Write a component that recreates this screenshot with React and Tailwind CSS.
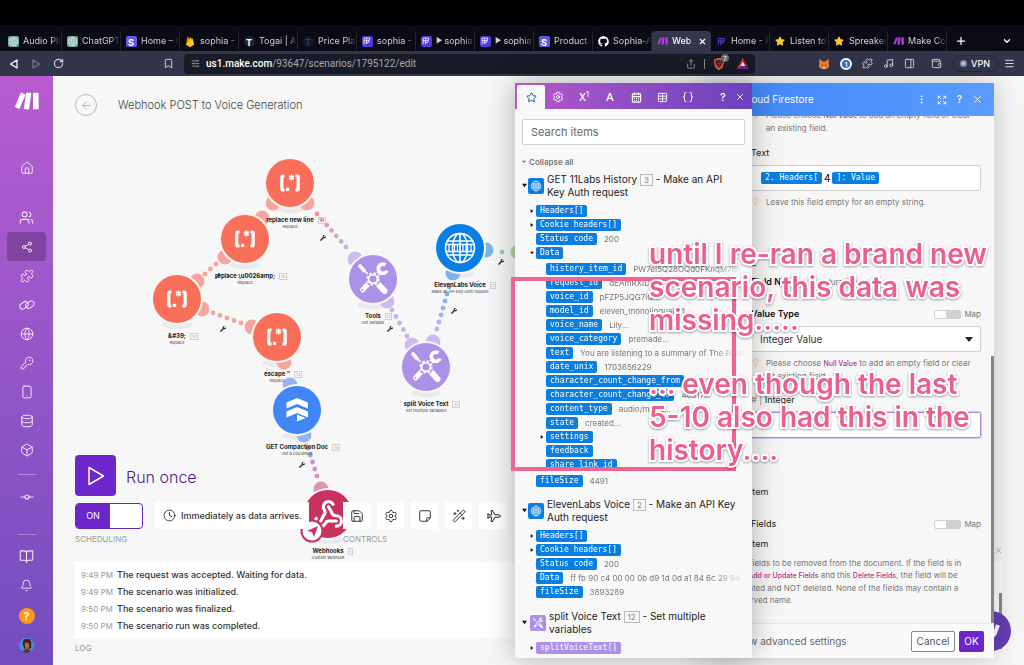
import {
  Bell,
  BookOpen,
  Box,
  Braces,
  CalendarDays,
  ChevronDown,
  Clock,
  Database,
  Globe,
  House,
  KeyRound,
  Lightbulb,
  Menu,
  Music,
  PanelRight,
  Plane,
  Plus,
  Puzzle,
  RotateCw,
  Save,
  Settings,
  Share,
  Share2,
  Smartphone,
  Star,
  StickyNote,
  Table,
  Users,
  Wallet,
  WandSparkles,
  Webhook,
  X,
  Bookmark,
  Expand,
  EllipsisVertical,
  GitCommitHorizontal,
  ArrowLeft,
  SlidersHorizontal,
} from "lucide-react";
import { FaGithub, FaStar, FaWrench } from "react-icons/fa";
import { SiBrave, SiOpenai } from "react-icons/si";

/* ---------- browser ---------- */

const MakeLogo = ({ className, fill = "#fff" }) => (
  <svg viewBox="0 0 25 18" className={className} fill={fill}>
    <path d="M7 .6 11.6 2.4 5.4 17 .8 15z" />
    <path d="M12.2.6 17.4 1 15 17.4 9.8 17z" />
    <path d="M19 .8h5.6v16.4H19z" />
  </svg>
);

const FirebaseIcon = () => (
  <svg viewBox="0 0 12 12" className="h-3 w-3">
    <path d="M2 9.6 3.4 1.2 5.4 4z" fill="#f57c00" />
    <path d="M2 9.6 6.6 1.8 10 9.6 6 12z" fill="#ffb300" />
    <path d="M2 9.6 8.8 3.2 10 9.6 6 12z" fill="#ffca28" />
  </svg>
);

const FIcon = ({ className }) => (
  <svg viewBox="0 0 12 12" className={className} fill="none" stroke="currentColor" strokeWidth="1">
    <path d="M2.5 10V2.5h7L8.6 5.6H2.5M5 10l.8-7.5M5 8l3-.4.6-2" />
  </svg>
);

const Favicon = ({ kind }) => {
  if (kind === "gpt")
    return (
      <span className="grid h-[11px] w-[11px] place-items-center rounded-xs bg-[#74a99b] text-white">
        <SiOpenai size={9} />
      </span>
    );
  if (kind === "s")
    return (
      <span className="grid h-[11px] w-[11px] place-items-center rounded-xs bg-[#635bdf] text-[9px] font-bold text-white">
        S
      </span>
    );
  if (kind === "fire") return <FirebaseIcon />;
  if (kind === "togai")
    return (
      <span className="grid h-[11px] w-[11px] place-items-center rounded-full bg-[#20222e] text-[9px] font-bold text-white">
        T
      </span>
    );
  if (kind === "price")
    return (
      <span className="grid h-[11px] w-[11px] place-items-center rounded-full bg-[#111a33] text-[8px] font-bold text-[#2a4475]">
        T
      </span>
    );
  if (kind === "f")
    return (
      <span className="grid h-[11px] w-[11px] place-items-center rounded-xs bg-[#5138e0] text-white">
        <FIcon className="h-[10px] w-[10px]" />
      </span>
    );
  if (kind === "fdark") return <FIcon className="h-[11px] w-[11px] text-[#5a45e8]" />;
  if (kind === "github") return <FaGithub size={11} className="text-white" />;
  if (kind === "star") return <FaStar size={10} className="text-[#ffc629]" />;
  return <MakeLogo className="h-2 w-[11px]" fill="#b339e6" />;
};

const tabs = [
  { icon: "gpt", title: "Audio Pla" },
  { icon: "gpt", title: "ChatGPT" },
  { icon: "s", title: "Home – O" },
  { icon: "fire", title: "sophia - F" },
  { icon: "togai", title: "Togai | Ac" },
  { icon: "price", title: "Price Plan" },
  { icon: "f", title: "sophia - F" },
  { icon: "f", title: "sophia", playing: true },
  { icon: "f", title: "sophia", playing: true },
  { icon: "s", title: "Product c" },
  { icon: "github", title: "Sophia-A" },
  { icon: "make", title: "Web", active: true },
  { icon: "fdark", title: "Home - F" },
  { icon: "star", title: "Listen to" },
  { icon: "star", title: "Spreaker" },
  { icon: "make", title: "Make Co" },
];

const TabBar = () => (
  <div className="flex h-[26px] items-end bg-[#0b0b16] pl-[3px] pr-3">
    {tabs.map((tab, i) => (
      <button
        key={i}
        className={`flex h-5 w-[59px] items-center gap-1 overflow-hidden pl-1 text-[9px] ${
          tab.active
            ? "rounded-t-sm bg-[#34364a] font-medium text-white"
            : "border-r border-[#25252f] text-[#d0d0d6]"
        }`}
      >
        <span className="flex w-[12px] shrink-0 justify-center">
          <Favicon kind={tab.icon} />
        </span>
        <span className="flex min-w-0 flex-1 items-center gap-[2px] overflow-hidden whitespace-nowrap text-left [mask-image:linear-gradient(to_right,#000_75%,transparent)]">
          {tab.playing && <span className="text-[7px]">▶</span>}
          {tab.title}
        </span>
        {tab.active && <X size={9} strokeWidth={3} className="mr-1 shrink-0" />}
      </button>
    ))}
    <button aria-label="New tab" className="flex h-5 items-center pl-2 text-white">
      <Plus size={12} strokeWidth={2.5} />
    </button>
    <button aria-label="Tab list" className="ml-auto flex h-5 items-center text-white">
      <ChevronDown size={10} strokeWidth={3} />
    </button>
  </div>
);

const FoxIcon = () => (
  <svg viewBox="0 0 12 12" className="h-3 w-3">
    <path d="M1 1 5 3.4h2L11 1l-.4 4.6.6 3L8.6 11H3.4L.8 8.6l.6-3z" fill="#e88139" />
    <path d="M3.4 6.2 5 7l-.6.8zM8.6 6.2 7 7l.6.8z" fill="#3a2410" />
    <path d="M4.6 9.6h2.8L7 11H5z" fill="#e6d6c6" />
  </svg>
);

const Toolbar = () => (
  <div className="flex h-[25px] items-center bg-[#33364a] text-[#d6d7df]">
    <div className="flex flex-1 items-center gap-3 pl-[9px]">
      <button aria-label="Back">
        <svg viewBox="0 0 10 10" className="h-[10px] w-[10px]" fill="none" stroke="#fff" strokeWidth="1.2">
          <path d="M8 1v8L1.6 5z" strokeLinejoin="round" />
        </svg>
      </button>
      <button aria-label="Forward">
        <svg viewBox="0 0 10 10" className="h-[10px] w-[10px]" fill="none" stroke="#73758a" strokeWidth="1.2">
          <path d="M2 1v8l6.400-4z" strokeLinejoin="round" />
        </svg>
      </button>
      <button aria-label="Reload">
        <RotateCw size={11} strokeWidth={2.5} />
      </button>
      <button aria-label="Bookmark" className="-mr-[2px] ml-auto">
        <Bookmark size={11} />
      </button>
      <div className="flex h-5 w-[571px] items-center rounded-sm bg-[#191b26] pl-[7px] pr-[6px]">
        <SlidersHorizontal size={9} className="text-[#a6a8b4]" />
        <p className="pl-[6px] font-[Roboto,sans-serif] text-[10px] text-[#a6a8b4]">
          <span className="font-medium text-white">us1.make.com</span>/93647/scenarios/1795122/edit
        </p>
        <div className="ml-auto flex items-center gap-2">
          <Share size={10} className="text-[#a6a8b4]" />
          <span className="h-[10px] w-px bg-[#8a8c98]" />
          <span className="relative text-[#fb542b]">
            <SiBrave size={12} />
            <span className="absolute -top-1 left-2 grid h-2 w-2 place-items-center rounded-full bg-[#666a78] text-[6px] text-white">
              7
            </span>
          </span>
          <svg viewBox="0 0 12 11" className="ml-1 h-[11px] w-3">
            <path d="M6 0 0 11l6-4z" fill="#ff4724" />
            <path d="M6 0 12 11 6 7z" fill="#9e1f63" />
            <path d="M0 11 6 7l6 4z" fill="#662d91" />
            <path d="M6 4 3.800 8h4.400z" fill="#fff" />
          </svg>
        </div>
      </div>
    </div>
    <div className="flex items-center gap-[10px] pl-[63px] pr-[9px]">
      <FoxIcon />
      <span className="grid h-3 w-3 place-items-center rounded-full border-2 border-white bg-[#2c6ccf] text-[6px] font-bold text-white">
        1
      </span>
      <Puzzle size={11} />
      <Music size={11} />
      <PanelRight size={11} fill="none" />
      <Wallet size={11} className="ml-[6px]" />
      <button className="flex h-[17px] items-center gap-1 rounded-full border border-[#26283a] px-[7px] text-[9px] font-medium text-white">
        <span className="h-[7px] w-[7px] rounded-full border-2 border-[#8d90a8] bg-[#cfd0da]" />
        VPN
      </button>
      <Menu size={11} strokeWidth={2.5} className="-ml-1" />
    </div>
  </div>
);

/* ---------- sidebar ---------- */

const LinkIcon = () => (
  <svg viewBox="0 0 16 16" className="h-4 w-4" fill="none" stroke="currentColor">
    <rect x=".5" y="5.500" width="9" height="5.600" rx="2.800" transform="rotate(-35 5 8.300)" />
    <rect x="6.500" y="4.800" width="9" height="5.600" rx="2.800" transform="rotate(-35 11 7.600)" />
  </svg>
);

const NavItem = ({ label, active, children }) => (
  <a
    href="#"
    aria-label={label}
    className={`grid h-[29px] w-[39px] place-items-center rounded-sm text-[#f3e6fb] ${active ? "bg-[#8045a3]" : ""}`}
  >
    {children}
  </a>
);

const Sidebar = () => (
  <nav className="flex w-[53px] shrink-0 flex-col items-center bg-linear-to-b from-[#b75cd0] to-[#724dbf]">
    <div className="flex h-[50px] items-center">
      <MakeLogo className="h-[18px] w-[25px]" />
    </div>
    <div className="mt-[27px]">
      <NavItem label="Home">
        <House size={14} strokeWidth={1.7} />
      </NavItem>
    </div>
    <div className="mt-[21px]">
      <NavItem label="Team">
        <Users size={15} strokeWidth={1.7} />
      </NavItem>
      <NavItem label="Scenarios" active>
        <Share2 size={12} strokeWidth={2} />
      </NavItem>
      <NavItem label="Templates">
        <Puzzle size={14} strokeWidth={1.7} />
      </NavItem>
      <NavItem label="Connections">
        <LinkIcon />
      </NavItem>
      <NavItem label="Webhooks">
        <Globe size={14} strokeWidth={1.7} />
      </NavItem>
      <NavItem label="Keys">
        <KeyRound size={14} strokeWidth={1.7} />
      </NavItem>
      <NavItem label="Devices">
        <Smartphone size={14} strokeWidth={1.7} />
      </NavItem>
      <NavItem label="Data stores">
        <Database size={14} strokeWidth={1.7} />
      </NavItem>
      <NavItem label="Data structures">
        <Box size={14} strokeWidth={1.7} />
      </NavItem>
    </div>
    <hr className="mt-[10px] w-[18px] border-[#b48ad8]" />
    <div className="mt-[7px]">
      <NavItem label="Custom apps">
        <GitCommitHorizontal size={16} strokeWidth={1.7} />
      </NavItem>
    </div>
    <div className="mt-auto flex flex-col items-center pb-3">
      <hr className="mb-[7px] w-[18px] border-[#a584d8]" />
      <NavItem label="Resources">
        <BookOpen size={15} strokeWidth={1.7} />
      </NavItem>
      <NavItem label="Notifications">
        <Bell size={13} strokeWidth={1.7} />
      </NavItem>
      <button className="mt-2 h-4 w-4 rounded-full bg-[#fb9a1c] text-[10px] font-semibold leading-4 text-white">?</button>
      <svg viewBox="0 0 16 16" className="mt-[14px] h-[15px] w-[15px]">
        <circle cx="8" cy="8" r="8" fill="#3f8fe8" />
        <path d="M4 7V4l2-3h5l2 3v6l-2 2H6z" fill="#4a1f1c" />
        <path d="M6 5h4l1 3-1 4H7z" fill="#a86b4c" />
        <path d="M3.500 14.500 7 12h3l2.500 2.500A8 8 0 0 1 3.500 14.500z" fill="#5c3030" />
      </svg>
    </div>
  </nav>
);

/* ---------- scenario diagram ---------- */

const RegexGlyph = () => (
  <svg viewBox="0 0 48 48" className="h-full w-full" fill="none" stroke="#fff">
    <path
      d="M18.500 17h-1.500q-1.200 0-1.200 1.200v11.600q0 1.200 1.200 1.200h1.500M29.500 17h1.500q1.200 0 1.200 1.200v11.600q0 1.200-1.200 1.200h-1.500"
      strokeWidth="3.200"
    />
    <path d="M25.500 15.500v6M23 17l5 3M28 17l-5 3" strokeWidth="1.600" />
    <path d="M20 28.800h3.200v3.200h-3.200z" fill="#fff" stroke="none" />
  </svg>
);

const ToolsGlyph = () => (
  <svg viewBox="0 0 48 48" className="h-full w-full" fill="none" stroke="#fff">
    <path d="m14 14 6 6.500" strokeWidth="1.800" />
    <path d="m11 11 4 4.500" strokeWidth="3.600" strokeLinecap="round" />
    <path d="m30 30 5.500 6" strokeWidth="6" strokeLinecap="round" />
    <path d="m19.500 28.500-6 6.500" strokeWidth="5" strokeLinecap="round" />
    <path d="m27.500 20.500 4.500-4.500" strokeWidth="4" />
    <path d="M36.500 10a4.600 4.600 0 1 0 1.600 5.600" strokeWidth="3.600" />
    <circle cx="24" cy="24" r="7.400" fill="#ab92e8" stroke="none" />
    <circle cx="24" cy="24" r="4.400" strokeWidth="1.800" />
    <circle cx="24" cy="24" r="5.800" strokeWidth="1.800" strokeDasharray="2.400 2.150" />
    <circle cx="13.500" cy="35" r="1" fill="#ab92e8" stroke="none" />
  </svg>
);

const GlobeGlyph = () => (
  <svg viewBox="0 0 48 48" className="h-full w-full" fill="none" stroke="#fff" strokeWidth="1.600">
    <circle cx="24" cy="24" r="14.500" />
    <ellipse cx="24" cy="24" rx="7.500" ry="14.500" />
    <path d="M24 9.500v29M12 17h24M12 31h24" />
    <path d="M9.500 20.500h29M9.500 27.500h29" />
    <path d="M13 21v6M18.500 21v6M21.500 21v6M27 21v6M30 21v6M35 21v6" strokeWidth="1.200" />
  </svg>
);

const FirestoreGlyph = () => (
  <svg viewBox="0 0 48 48" className="h-full w-full" fill="#fff">
    <path d="M13.500 16.500 24 12l11 4.500v6L24 18l-10.500 4.500z" />
    <path d="M13.500 25.500 24 21l11 4.500v6L24 27l-10.500 4.500z" />
    <path d="m24 28.500 8.500 3.500-8.500 3.500z" />
  </svg>
);

const WebhookGlyph = () => (
  <div className="grid h-full w-full place-items-center text-white">
    <Webhook size={31} strokeWidth={2.4} />
  </div>
);

const coral = "#f96f5a";
const lilac = "#ab92e8";
const blue = "#0a7fe3";
const azure = "#4086f7";
const crimson = "#c8325f";

const nodes = [
  { x: 290, y: 183, name: "replace new line", sub: "Replace", n: 15, color: coral, Glyph: RegexGlyph },
  { x: 245, y: 239, name: "replace \\u0026amp;", sub: "Replace", n: 16, color: coral, Glyph: RegexGlyph },
  { x: 177, y: 299, name: "&#39;", sub: "Replace", n: 14, color: coral, Glyph: RegexGlyph },
  { x: 277, y: 337, name: "escape \"", sub: "Replace", n: 13, color: coral, Glyph: RegexGlyph },
  { x: 373, y: 279, name: "Tools", sub: "Set variable", n: 11, color: lilac, Glyph: ToolsGlyph },
  { x: 426, y: 367, name: "split Voice Text", sub: "Set multiple variables", n: 12, color: lilac, Glyph: ToolsGlyph },
  { x: 460, y: 248, name: "ElevenLabs Voice", sub: "Make an API Key Auth request", n: 2, color: blue, Glyph: GlobeGlyph },
  { x: 297, y: 410, name: "GET Compaction Doc", sub: "Get a Document", n: 10, color: azure, Glyph: FirestoreGlyph },
  { x: 328, y: 514, name: "Webhooks", sub: "Custom webhook", n: 1, color: crimson, Glyph: WebhookGlyph },
];

const bumps = [
  [273, 203, "#f5a59b"],
  [307, 203, "#f5a59b"],
  [262, 218, "#f5a59b"],
  [225, 257, "#f5a59b"],
  [197, 281, "#f5a59b"],
  [202, 309, "#f5a59b"],
  [252, 327, "#f5a59b"],
  [284, 362, "#f5a59b"],
  [290, 385, "#92b4f3"],
  [304, 435, "#92b4f3"],
  [321, 489, "#dd93ae"],
  [355, 259, "#cbbcf0"],
  [387, 301, "#cbbcf0"],
  [412, 345, "#cbbcf0"],
  [433, 342, "#cbbcf0"],
  [453, 273, "#7fb3e8"],
  [486, 250, "#7fb3e8"],
  [518, 252, "#b4d69a"],
];

const links = [
  { from: [317, 214], to: [346, 247], count: 7, colors: [[232, 150, 155], [196, 178, 236]] },
  { from: [205, 274], to: [216, 264], count: 3, colors: [[245, 165, 155], [245, 165, 155]] },
  { from: [213, 313], to: [241, 323], count: 5, colors: [[245, 165, 155], [245, 165, 155]] },
  { from: [308, 448], to: [317, 476], count: 5, colors: [[150, 165, 225], [215, 145, 180]] },
  { from: [392, 310], to: [407, 336], count: 5, colors: [[196, 178, 236], [196, 178, 236]] },
  { from: [449, 287], to: [437, 329], count: 7, colors: [[127, 175, 235], [185, 180, 238]] },
  { from: [502, 252], to: [502, 252], count: 1, colors: [[160, 200, 190], [160, 200, 190]] },
];

const wrenches = [
  [323, 238],
  [218, 276],
  [223, 329],
  [390, 329],
  [454, 311],
  [501, 262],
  [302, 465],
];

const mix = (a, b, t) => Math.round(a + (b - a) * t);

// Canvas coordinates start at the window's corner; the group shifts them into the pane.
const Diagram = () => (
  <div className="absolute inset-0 overflow-hidden">
    <div className="absolute -left-[53px] -top-[76px]">
      <svg width="540" height="600" className="block">
        {nodes.map((node) => (
          <ellipse key={node.name} cx={node.x} cy={node.y + 26} rx="15" ry="4" fill="#eaeaed" />
        ))}
        {links.map((link, i) =>
          Array.from({ length: link.count }, (_, k) => {
            const t = link.count > 1 ? k / (link.count - 1) : 0;
            const rgb = [0, 1, 2].map((c) => mix(link.colors[0][c], link.colors[1][c], t));
            return (
              <circle
                key={`${i}-${k}`}
                cx={mix(link.from[0] * 10, link.to[0] * 10, t) / 10}
                cy={mix(link.from[1] * 10, link.to[1] * 10, t) / 10}
                r="2.400"
                fill={`rgb(${rgb.join(",")})`}
              />
            );
          })
        )}
        {bumps.map(([x, y, fill]) => (
          <circle key={`${x}-${y}`} cx={x} cy={y} r="7.400" fill={fill} />
        ))}
        {nodes.map((node) => (
          <circle key={node.name} cx={node.x} cy={node.y} r="26" fill="#f7f7f7" />
        ))}
      </svg>
      {nodes.map(({ x, y, name, sub, n, color, Glyph }) => (
        <div
          key={name}
          className="absolute flex w-12 -translate-x-1/2 flex-col items-center"
          style={{ left: x, top: y - 24 }}
        >
          <div className="h-12 w-12 rounded-full" style={{ background: color }}>
            <Glyph />
          </div>
          <div className="relative mt-[9px] whitespace-nowrap text-[6px] font-bold leading-2 text-[#222]">
            {name}
            <span className="absolute left-full top-px ml-1 border border-[#d0d0d0] px-px text-[4px] font-normal leading-[5px] text-[#aaa]">
              {n}
            </span>
          </div>
          <p className="whitespace-nowrap text-[4px] leading-[6px] text-[#444]">{sub}</p>
        </div>
      ))}
      {wrenches.map(([x, y]) => (
        <FaWrench key={`${x}-${y}`} size={6} className="absolute text-[#333]" style={{ left: x - 3, top: y - 3 }} />
      ))}
      <svg viewBox="0 0 24 24" className="absolute left-[300px] top-[519px] h-6 w-6">
        <circle cx="12" cy="12" r="10.500" fill="#fff" stroke={crimson} strokeWidth="2" />
        <path d="M18 7 7 12l5 1 2 5z" fill={crimson} />
      </svg>
    </div>
  </div>
);

/* ---------- bottom bar ---------- */

const controls = [
  { label: "Save", icon: <Save size={14} strokeWidth={1.7} /> },
  { label: "Scenario settings", icon: <Settings size={14} strokeWidth={1.7} /> },
  { label: "Notes", icon: <StickyNote size={14} strokeWidth={1.7} className="rotate-90" /> },
  { label: "Auto-align", icon: <WandSparkles size={14} strokeWidth={1.7} /> },
  { label: "Explain flow", icon: <Plane size={14} strokeWidth={1.7} className="rotate-45" /> },
];

const log = [
  ["9:49 PM", "The request was accepted. Waiting for data."],
  ["9:49 PM", "The scenario was initialized."],
  ["9:50 PM", "The scenario was finalized."],
  ["9:50 PM", "The scenario run was completed."],
];

const BottomBar = () => (
  <div className="relative mt-auto px-[22px] pb-[11px]">
    <div className="flex items-center gap-[10px]">
      <button aria-label="Run" className="grid h-[41px] w-[41px] place-items-center rounded-sm bg-[#6d25cc]">
        <svg viewBox="0 0 18 20" className="h-5 w-[18px]" fill="none" stroke="#fff" strokeWidth="1.500">
          <path d="M2 1.500v17L16.500 10z" strokeLinejoin="round" />
        </svg>
      </button>
      <span className="mt-[3px] text-[16px] font-light text-[#4f1a96]">Run once</span>
    </div>
    <div className="mt-[6px] flex items-start">
      <div className="w-[268px]">
        <div className="flex items-center gap-3">
          <button className="flex h-[26px] w-[68px] overflow-hidden rounded-sm border border-[#6225b8] bg-white text-[9px] text-white">
            <span className="flex h-full w-[34px] items-center justify-center bg-[#6d25cc]">ON</span>
          </button>
          <button className="flex h-[27px] w-[154px] items-center gap-[5px] whitespace-nowrap bg-white pl-2 text-[9px] font-medium text-[#333]">
            <Clock size={13} strokeWidth={1.7} className="shrink-0" />
            Immediately as data arrives.
          </button>
        </div>
        <p className="mt-1 text-[8px] leading-3 text-[#999]">SCHEDULING</p>
      </div>
      <div>
        <div className="flex gap-[7px]">
          {controls.map(({ label, icon }) => (
            <button key={label} aria-label={label} className="grid h-[27px] w-[27px] place-items-center bg-white text-[#333]">
              {icon}
            </button>
          ))}
        </div>
        <p className="mt-1 text-[8px] leading-3 text-[#999]">CONTROLS</p>
      </div>
    </div>
    <div className="mt-[17px] bg-white px-[6px] py-1">
      {log.map(([time, text]) => (
        <p key={text} className="flex h-[17px] items-center gap-[7px] text-[9px] font-medium text-[#333]">
          <span className="w-[29px] whitespace-nowrap text-[8px] font-normal text-[#999]">{time}</span>
          {text}
        </p>
      ))}
    </div>
    <p className="mt-1 text-[8px] leading-3 text-[#999]">LOG</p>
  </div>
);

/* ---------- module settings panel ---------- */

const NullHint = () => (
  <p className="flex gap-[6px] text-[8px] leading-3 text-[#777]">
    <Lightbulb size={9} className="mt-px shrink-0 text-[#e6c888]" />
    <span>
      Please choose <b className="text-[7px] font-medium text-[#b8308c]">Null Value</b> to add an empty field or clear
      <br />
      an existing field.
    </span>
  </p>
);

const MapToggle = ({ id }) => (
  <label htmlFor={id} className="flex items-center gap-[3px] text-[8px] text-[#777]">
    <input
      id={id}
      type="checkbox"
      className="h-[9px] w-[27px] appearance-none rounded-xs border border-[#d0d0d0] bg-linear-to-r from-white from-45% to-[#d0d0d0] to-45%"
    />
    Map
  </label>
);

const Chip = ({ children, color = "bg-[#0a7fe0]" }) => (
  <span className={`whitespace-nowrap rounded-xs px-1 font-['DejaVu_Sans_Mono',monospace] text-[8px] leading-3 text-white ${color}`}>
    {children}
  </span>
);

const FirestorePanel = () => (
  <section className="absolute bottom-[7px] right-[30px] top-[7px] flex w-[296px] flex-col bg-[#f7f7f7] shadow-[0_0_28px_rgba(0,0,0,0.22)]">
    <header className="flex h-[33px] shrink-0 items-center justify-between bg-linear-to-r from-[#3d85f5] to-[#5a9cff] pl-[7px] pr-[11px] text-white">
      <h2 className="text-[10px]">Google Cloud Firestore</h2>
      <div className="flex items-center gap-[10px]">
        <EllipsisVertical size={11} />
        <Expand size={10} />
        <span className="text-[10px] font-medium">?</span>
        <X size={11} />
      </div>
    </header>
    <div className="flex flex-1 flex-col overflow-hidden border-r-[3px] border-[#f7f7f7] pl-[53px] pr-[10px]">
      <div className="-mt-[7px]">
        <NullHint />
      </div>
      <p id="text-label" className="mt-[13px] text-[9px] leading-3 text-[#222]">
        Text
      </p>
      <div
        role="textbox"
        aria-labelledby="text-label"
        className="mt-[6px] flex h-[26px] items-center gap-[2px] rounded-xs border border-[#d0d0d0] bg-white pl-[9px] text-[10px]"
      >
        <Chip>2. Headers[</Chip>4<Chip>]: Value</Chip>
      </div>
      <p className="mt-[5px] flex gap-[6px] text-[8px] leading-3 text-[#777]">
        <Lightbulb size={9} className="mt-px shrink-0 text-[#e6c888]" />
        Leave this field empty for an empty string.
      </p>
      <p className="mt-[49px] text-[9px] leading-3 text-[#222]">2</p>
      <p className="mt-[7px] text-[9px] font-semibold leading-3 text-[#111]">
        Field Name <span className="pl-6 text-[8px] font-normal text-[#777]">duration</span>
      </p>
      <div className="mt-5 flex items-center justify-between">
        <label htmlFor="value-type" className="text-[9px] font-semibold leading-3 text-[#111]">
          Value Type
        </label>
        <MapToggle id="map-type" />
      </div>
      <div className="relative mt-[6px]">
        <select
          id="value-type"
          className="block h-[26px] w-full appearance-none rounded-xs border border-[#d0d0d0] bg-white pl-2 text-[10px] text-[#333]"
        >
          <option>Integer Value</option>
        </select>
        <svg viewBox="0 0 8 5" className="absolute right-2 top-[11px] h-[5px] w-2" fill="#222">
          <path d="M0 0h8L4 5z" />
        </svg>
      </div>
      <div className="mt-[5px]">
        <NullHint />
      </div>
      <label htmlFor="integer" className="mt-3 text-[9px] leading-3 text-[#222]">
        <span className="text-[#888]"># |</span> Integer
      </label>
      <input
        id="integer"
        defaultValue="1"
        className="mt-[6px] h-[26px] shrink-0 rounded-xs border border-[#b084e0] bg-white pl-2 text-[10px] outline-1 outline-[#d9c6ef]"
      />
      <div className="-ml-[21px] text-[9px] leading-3 text-[#222]">
        <p className="mt-12">Add Item</p>
        <div className="mt-5 flex items-center justify-between pl-[2px]">
          <span>Del. Fields</span>
          <MapToggle id="map-fields" />
        </div>
        <p className="mt-2">Add Item</p>
        <p className="mt-[7px] whitespace-nowrap pl-1 text-[8px] text-[#777]">
          List fields to be removed from the document. If the field is in
          <br />
          the <b className="text-[7px] font-medium text-[#b8308c]">Add or Update Fields</b> and this{" "}
          <b className="text-[7px] font-medium text-[#b8308c]">Delete Fields</b>, the field will be
          <br />
          updated and NOT deleted. None of the fields may contain a
          <br />
          reserved name.
        </p>
      </div>
    </div>
    <span className="absolute right-0 top-[273px] h-[267px] w-[3px] bg-[#858585]" />
    <footer className="flex h-[35px] shrink-0 items-center justify-end gap-1 border-t border-[#e6e6e6] bg-[#fafafa] pr-[10px] text-[9px]">
      <span className="mr-auto pl-[33px] text-[10px] text-[#666]">Show advanced settings</span>
      <button className="h-[21px] w-11 rounded-xs border border-[#888] bg-white text-[10px] text-[#555]">Cancel</button>
      <button className="h-[21px] w-[25px] rounded-xs bg-[#6d25cc] text-[10px] text-white">OK</button>
    </footer>
  </section>
);

/* ---------- variables panel ---------- */

const Row = ({ name, value, open, color }) => (
  <li className="flex h-[14px] items-center whitespace-nowrap">
    <span className="flex w-[6px] shrink-0 items-center">
      {open !== undefined && (
        <svg viewBox="0 0 6 6" className="h-1 w-1" fill="#111">
          <path d={open ? "M0 1h6L3 5z" : "M1 0v6l4-3z"} />
        </svg>
      )}
    </span>
    <Chip color={color}>{name}</Chip>
    <span className="pl-[7px] text-[8px] leading-3 text-[#777]">{value}</span>
  </li>
);

const GroupHead = ({ icon, title, n, rest }) => (
  <div className="flex items-center pr-2">
    <svg viewBox="0 0 6 6" className="mr-px h-[5px] w-[5px] shrink-0" fill="#111">
      <path d="M0 1h6L3 5z" />
    </svg>
    {icon}
    <h3 className="pl-[3px] text-[10px] leading-3 text-[#222]">
      {title} <span className="border border-[#bbb] px-[3px] text-[8px] text-[#888]">{n}</span> - {rest}
    </h3>
  </div>
);

const GlobeTile = () => (
  <span className="h-4 w-4 shrink-0 rounded-xs bg-[#0a7fe0]">
    <GlobeGlyph />
  </span>
);

const historyFields = [
  { name: "history_item_id", value: "PW7eI5Q28OQd0FKnqM7ler" },
  { name: "request_id", value: "dEAmRXIDqLs" },
  { name: "voice_id", value: "pFZP5JQG7iQ..." },
  { name: "model_id", value: "eleven_monolingual_v1..." },
  { name: "voice_name", value: "Lily..." },
  { name: "voice_category", value: "premade..." },
  { name: "text", value: "You are listening to a summary of The Future" },
  { name: "date_unix", value: "1703656229" },
  { name: "character_count_change_from", value: "48210" },
  { name: "character_count_change_to", value: "48317..." },
  { name: "content_type", value: "audio/mpeg..." },
  { name: "state", value: "created..." },
  { name: "settings", open: false },
  { name: "feedback" },
  { name: "share_link_id" },
];

const panelTools = [
  <Settings size={12} />,
  <span className="text-[10px] font-medium">
    X<sup className="text-[7px]">1</sup>
  </span>,
  <span className="text-[11px] font-medium">A</span>,
  <CalendarDays size={11} strokeWidth={2.5} />,
  <Table size={11} />,
  <Braces size={12} />,
];

const VariablesPanel = () => (
  <section className="absolute bottom-[7px] right-[272px] top-[7px] flex w-[237px] flex-col overflow-hidden bg-[#f8f8f8] shadow-[0_0_28px_rgba(0,0,0,0.3)]">
    <header className="flex h-[26px] shrink-0 items-end bg-linear-to-r from-[#b557c9] to-[#6a41bd] pl-[2px] pr-1 text-white">
      <button aria-label="Modules" className="grid h-6 w-[28px] place-items-center rounded-t-xs bg-[#f8f8f8] text-[#16516e]">
        <Star size={11} />
      </button>
      {panelTools.map((tool, i) => (
        <button key={i} className="grid h-6 w-[26px] place-items-center">
          {tool}
        </button>
      ))}
      <button className="ml-auto h-6 w-[18px] text-[11px] font-medium">?</button>
      <button aria-label="Close" className="grid h-6 w-4 place-items-center">
        <X size={10} />
      </button>
    </header>
    <div className="flex-1 overflow-hidden px-[7px] pt-[10px]">
      <input
        aria-label="Search items"
        placeholder="Search items"
        className="block h-[26px] w-full rounded-xs border border-[#d0d0d0] bg-white px-2 text-[11px] placeholder:text-[#666]"
      />
      <p className="mt-[11px] flex items-center gap-[3px] text-[8px] font-semibold leading-3 text-[#777]">
        <svg viewBox="0 0 6 6" className="h-1 w-1" fill="#777">
          <path d="M0 1h6L3 5z" />
        </svg>
        Collapse all
      </p>
      <div className="mt-[5px]">
        <GroupHead icon={<GlobeTile />} title="GET 11Labs History" n={3} rest="Make an API Key Auth request" />
        <ul className="mt-[6px] overflow-hidden pl-2 [mask-image:linear-gradient(to_right,#000_85%,transparent)]">
          <Row name="Headers[]" open={false} />
          <Row name="Cookie headers[]" open={false} />
          <Row name="Status code" value="200" />
          <Row name="Data" open />
          <li>
            <ul className="my-[2px] pl-[10px]">
              {historyFields.map((field) => (
                <Row key={field.name} {...field} />
              ))}
            </ul>
          </li>
          <Row name="fileSize" value="4491" />
        </ul>
      </div>
      <div className="mt-[10px]">
        <GroupHead icon={<GlobeTile />} title="ElevenLabs Voice" n={2} rest="Make an API Key Auth request" />
        <ul className="mt-[6px] overflow-hidden pl-2 [mask-image:linear-gradient(to_right,#000_85%,transparent)]">
          <Row name="Headers[]" open={false} />
          <Row name="Cookie headers[]" open={false} />
          <Row name="Status code" value="200" />
          <Row name="Data" value="ff fb 90 c4 00 00 0b d9 1d 0d a1 84 6c 29 94" />
          <Row name="fileSize" value="3893289" />
        </ul>
      </div>
      <div className="mt-[11px]">
        <GroupHead
          icon={
            <span className="ml-[2px] h-4 w-4 shrink-0 rounded-xs bg-[#ab92e8]">
              <ToolsGlyph />
            </span>
          }
          title="split Voice Text"
          n={12}
          rest="Set multiple variables"
        />
        <ul className="mt-[6px] pl-2">
          <Row name="splitVoiceText[]" open={false} color="bg-[#ab92e8]" />
        </ul>
      </div>
    </div>
  </section>
);

/* ---------- notes drawn on top ---------- */

const Annotations = () => (
  <>
    <div className="pointer-events-none absolute right-[288px] top-[201px] h-[194px] w-[225px] border-4 border-[#f0648f]" />
    <div className="pointer-events-none absolute right-[15px] top-[162px] w-[360px] whitespace-nowrap text-[28px] font-semibold leading-[33px] text-[#ec5f8d] [-webkit-text-stroke:4px_#fff] [paint-order:stroke_fill] drop-shadow-[0_1px_1px_rgba(0,0,0,0.35)]">
      <p>
        until I re-ran a brand new
        <br />
        scenario, this data was
        <br />
        missing.....
      </p>
      <p className="mt-[31px]">
        ... even though the last
        <br />
        5-10 also had this in the
        <br />
        history....
      </p>
    </div>
  </>
);

const App = () => (
  <div className="flex h-screen min-h-[600px] flex-col overflow-hidden bg-black pt-[25px] font-[Inter,'Liberation_Sans',sans-serif]">
    <TabBar />
    <Toolbar />
    <div className="flex min-h-0 flex-1">
      <Sidebar />
      <main className="relative flex flex-1 flex-col bg-[#f7f7f7]">
        <Diagram />
        <header className="relative flex items-center gap-[21px] px-[22px] pt-[18px]">
          <button aria-label="Back" className="grid h-[22px] w-[22px] place-items-center rounded-full border border-[#bbb] text-[#aaa]">
            <ArrowLeft size={13} strokeWidth={1.5} />
          </button>
          <h1 className="text-[11px] font-light text-[#444]">Webhook POST to Voice Generation</h1>
        </header>
        <BottomBar />
        <X size={9} className="absolute bottom-[110px] right-[21px] text-[#999]" />
        <span className="absolute bottom-4 right-[22px] h-14 w-[3px] bg-[#8a8a8a]" />
        <button
          aria-label="Help chat"
          className="absolute bottom-[14px] right-[13px] grid h-10 w-10 place-items-center rounded-full bg-[#653fb5]"
        >
          <svg viewBox="0 0 24 16" className="h-4 w-6" fill="none" stroke="#fff" strokeWidth="4">
            <path d="M6 2 4 9q0 5 5 5t7-4l3-8" />
          </svg>
        </button>
        <FirestorePanel />
        <VariablesPanel />
        <Annotations />
      </main>
    </div>
  </div>
);

export default App;
